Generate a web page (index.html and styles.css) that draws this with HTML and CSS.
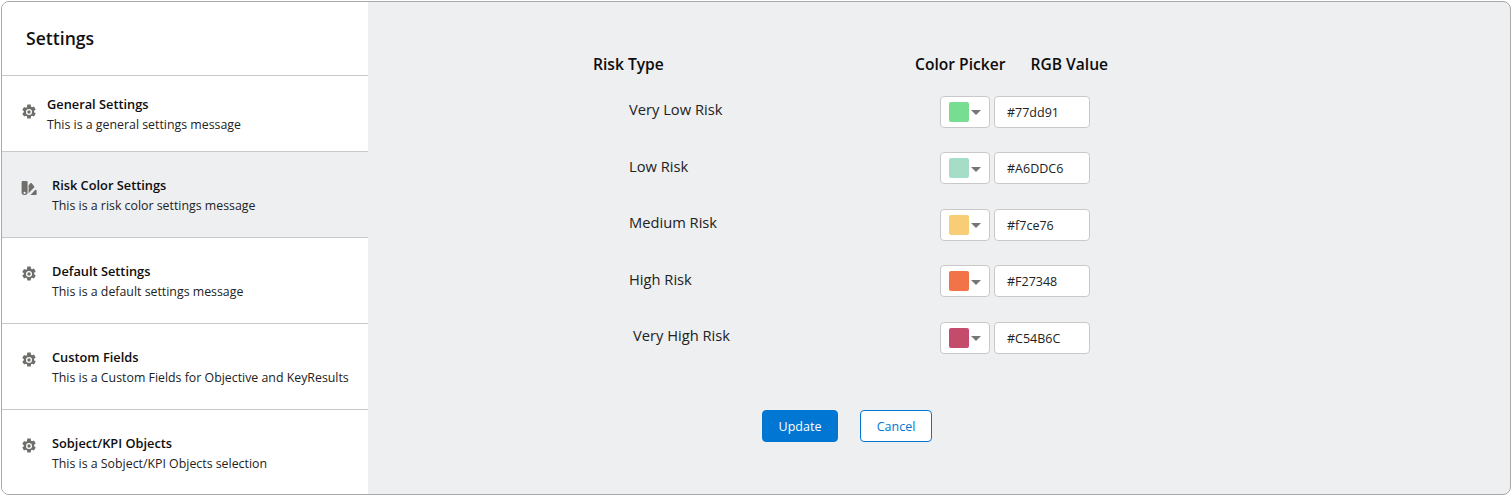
FILE: index.html
```html
<!DOCTYPE html>
<html lang="en">
<head>
<meta charset="utf-8">
<title>Settings</title>
<link rel="stylesheet" href="styles.css">
</head>
<body>
<svg class="defs" width="0" height="0" aria-hidden="true">
  <symbol id="gear" viewBox="0 0 16 16">
    <path fill-rule="evenodd" d="M6.300.6h3.400l.4 2.100.9.5 2-.7 1.700 3-1.600 1.300v1.400l1.600 1.300-1.700 3-2-.7-.9.5-.4 2.100H6.300l-.4-2.100-.9-.5-2 .7-1.700-3 1.600-1.300V7.300L1.300 6l1.700-3 2 .7.900-.5zM8 5a3 3 0 1 0 0 6 3 3 0 0 0 0-6z"/>
    <circle cx="8" cy="8" r="1.700"/>
  </symbol>
</svg>
<div class="app">
  <aside class="sidebar">
    <h1 class="title">Settings</h1>
    <a class="item item-general"><svg class="icon"><use href="#gear"/></svg><span class="text"><b>General Settings</b><span>This is a general settings message</span></span></a>
    <a class="item item-active"><svg class="icon" viewBox="0 0 16 16"><path fill-rule="evenodd" d="M1.800 1h3.600c.7 0 1.200.5 1.200 1.200v10.600c0 1.300-1.100 2.200-2.300 2.200H2.900C1.700 15 .6 14.100.6 12.800V2.200C.6 1.500 1.100 1 1.800 1zm1.800 10.800a1.100 1.100 0 1 0 0 2.200 1.100 1.100 0 0 0 0-2.200z"/><path d="M7.600 5.300l1.800-2c.4-.4 1-.4 1.400 0l2.300 2.900c.4.400.4 1 0 1.400l-5.500 5.600z"/><path d="M9.400 15l5-5.200h.2c.5 0 1 .4 1 1V14c0 .6-.5 1-1 1z"/></svg><span class="text"><b>Risk Color Settings</b><span>This is a risk color settings message</span></span></a>
    <a class="item"><svg class="icon"><use href="#gear"/></svg><span class="text"><b>Default Settings</b><span>This is a default settings message</span></span></a>
    <a class="item"><svg class="icon"><use href="#gear"/></svg><span class="text"><b>Custom Fields</b><span>This is a Custom Fields for Objective and KeyResults</span></span></a>
    <a class="item item-last"><svg class="icon"><use href="#gear"/></svg><span class="text"><b>Sobject/KPI Objects</b><span>This is a Sobject/KPI Objects selection</span></span></a>
  </aside>
  <main class="main">
    <div class="heads">
      <span class="head-type">Risk Type</span>
      <span class="head-picker">Color Picker</span>
      <span>RGB Value</span>
    </div>
    <div class="row">
      <span class="label">Very Low Risk</span>
      <span class="picker"><i class="swatch" style="background:#77dd91"></i><i class="caret"></i></span>
      <span class="value">#77dd91</span>
    </div>
    <div class="row">
      <span class="label">Low Risk</span>
      <span class="picker"><i class="swatch" style="background:#a6ddc6"></i><i class="caret"></i></span>
      <span class="value">#A6DDC6</span>
    </div>
    <div class="row">
      <span class="label">Medium Risk</span>
      <span class="picker"><i class="swatch" style="background:#f7ce76"></i><i class="caret"></i></span>
      <span class="value">#f7ce76</span>
    </div>
    <div class="row">
      <span class="label">High Risk</span>
      <span class="picker"><i class="swatch" style="background:#f27348"></i><i class="caret"></i></span>
      <span class="value">#F27348</span>
    </div>
    <div class="row">
      <span class="label label-wide">Very High Risk</span>
      <span class="picker"><i class="swatch" style="background:#c54b6c"></i><i class="caret"></i></span>
      <span class="value">#C54B6C</span>
    </div>
    <div class="actions">
      <button class="btn btn-primary">Update</button>
      <button class="btn btn-outline">Cancel</button>
    </div>
  </main>
</div>
</body>
</html>
```
FILE: styles.css
```css
* { box-sizing: border-box; }
html, body { margin: 0; height: 100%; }
body {
  background: #fff;
  font-family: "Open Sans", "Noto Sans", "Liberation Sans", sans-serif;
  color: #181818;
  overflow: hidden;
}
.defs { position: absolute; }
.app {
  display: flex;
  width: 1510px;
  height: 494px;
  margin: 1px;
  border: 1px solid #a9a9a9;
  border-radius: 8px;
  overflow: hidden;
  background: #eeeff1;
}
.sidebar {
  width: 366px;
  flex: none;
  background: #fff;
  display: flex;
  flex-direction: column;
}
.title {
  flex: none;
  margin: 0;
  height: 74px;
  padding: 24px 0 0 24px;
  font-size: 17.6px;
  line-height: 24px;
  font-weight: 600;
  color: #111;
  border-bottom: 1px solid #c9c9c9;
}
.item {
  flex: none;
  display: flex;
  height: 86px;
  padding: 24px 0 0 19px;
  border-bottom: 1px solid #c9c9c9;
}
.item-general { height: 76px; padding-top: 19px; }
.item-active { background: #eeeff1; }
.item-last { border-bottom: 0; height: 84px; }
.icon {
  width: 16px;
  height: 16px;
  flex: none;
  margin: 4px 15px 0 0;
  fill: #706e6b;
}
.item-general .icon { margin: 9px 10px 0 0; }
.item-active .icon { margin-top: 4px; }
.text { display: flex; flex-direction: column; }
.text b {
  font-size: 12.8px;
  line-height: 18px;
  font-weight: 600;
  color: #0d0d0d;
}
.text span {
  font-size: 12.35px;
  line-height: 18px;
  margin-top: 3px;
  color: #222;
  white-space: nowrap;
}
.main {
  flex: 1;
  padding: 51px 0 0 225px;
}
.heads {
  display: flex;
  height: 22px;
  font-size: 15.6px;
  line-height: 22px;
  font-weight: 600;
  color: #0d0d0d;
  margin-bottom: 20.9px;
}
.head-type { width: 322px; }
.head-picker { width: 115.5px; }
.row {
  display: flex;
  height: 32px;
  margin-bottom: 24.5px;
}
.label {
  width: 347px;
  padding: 0.3px 0 0 36px;
  font-size: 14.7px;
  line-height: 26px;
  color: #222;
}
.label-wide { padding-left: 40px; }
.picker {
  display: flex;
  align-items: center;
  width: 50px;
  height: 32px;
  margin-right: 4px;
  padding-left: 8px;
  background: #fff;
  border: 1px solid #c9c9c9;
  border-radius: 4px;
}
.swatch {
  display: block;
  width: 20px;
  height: 20px;
  border-radius: 2px;
}
.caret {
  display: block;
  margin: 2px 0 0 1.500px;
  border-style: solid;
  border-width: 5px 5px 0;
  border-color: #767676 transparent transparent;
}
.value {
  width: 96px;
  height: 32px;
  padding-left: 12px;
  background: #fff;
  border: 1px solid #c9c9c9;
  border-radius: 4px;
  font-size: 12.5px;
  line-height: 31px;
  color: #222;
}
.actions {
  display: flex;
  gap: 22px;
  margin: 56px 0 0 169px;
}
.btn {
  height: 32px;
  border-radius: 4px;
  font-family: inherit;
  font-size: 12.5px;
  padding: 1px 0 0;
}
.btn-primary {
  width: 76px;
  background: #0176d3;
  border: 1px solid #0176d3;
  color: #fff;
  font-weight: 500;
}
.btn-outline {
  width: 72px;
  background: #fff;
  border: 1px solid #0176d3;
  color: #0176d3;
}
```
